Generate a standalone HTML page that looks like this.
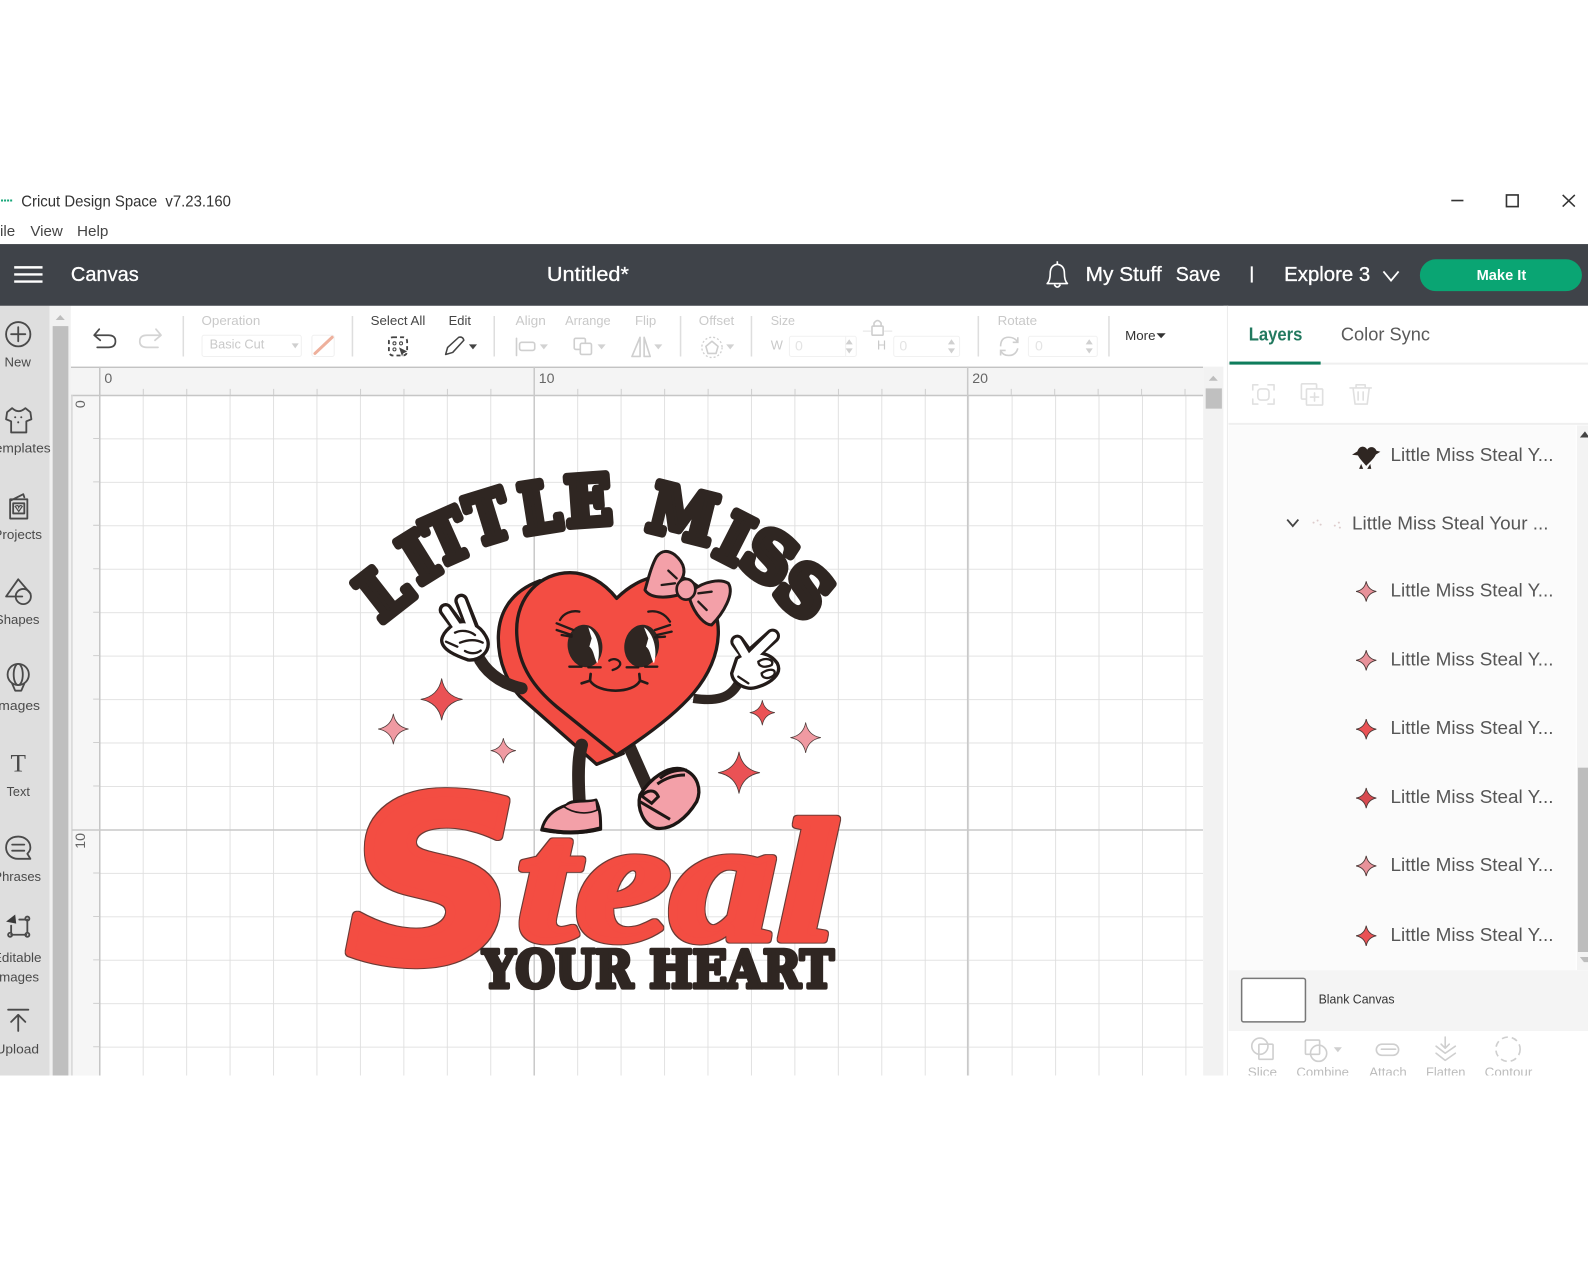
<!DOCTYPE html>
<html>
<head>
<meta charset="utf-8">
<title>Cricut Design Space</title>
<style>
html,body{margin:0;padding:0;background:#fff;width:1588px;height:1270px;overflow:hidden}
svg{display:block}
text{font-family:"Liberation Sans",sans-serif}
.nav{font-size:13px;fill:#4a4a4a;text-anchor:middle}
.off{font-size:13px;fill:#c9c9c9}
.on{font-size:13px;fill:#454545}
.lay{font-size:18.5px;fill:#565656}
.ic{fill:none;stroke:#4a4a4a;stroke-width:1.8;stroke-linecap:round;stroke-linejoin:round}
.icl{fill:none;stroke:#cfcfcf;stroke-width:1.6;stroke-linecap:round;stroke-linejoin:round}
.wh{font-size:20px;fill:#fff;stroke:#fff;stroke-width:.3px}
.bot{font-size:13px;fill:#bdbdbd}
.g{font-family:"DejaVu Serif",serif;font-weight:bold;font-size:200px;fill:#2f2622;stroke:#2f2622;stroke-width:26px;stroke-linejoin:round;text-anchor:middle}
</style>
</head>
<body>
<svg xmlns="http://www.w3.org/2000/svg" width="1588" height="1270" viewBox="0 0 1568 1254">
<defs>
<pattern id="grid" patternUnits="userSpaceOnUse" x="98" y="390" width="42.9" height="42.9">
<path d="M0,0H42.9M0,0V42.9" fill="none" stroke="#dfdfdf" stroke-width="1.8"/>
</pattern>
<clipPath id="cv"><rect x="70" y="362" width="1118" height="700"/></clipPath>
<clipPath id="bt"><rect x="1213" y="1018" width="355" height="44"/></clipPath>
<path id="st" d="M0,-10 Q1.6,-1.6 10,0 Q1.6,1.6 0,10 Q-1.6,1.6 -10,0 Q-1.6,-1.6 0,-10Z"/>
<filter id="ol" x="-20%" y="-20%" width="140%" height="140%">
<feMorphology in="SourceAlpha" operator="dilate" radius="3"/>
<feFlood flood-color="#6b3a36" result="c"/>
<feComposite in="c" in2="" operator="in"/>
</filter>
<filter id="outl" x="-20%" y="-20%" width="140%" height="140%">
<feMorphology in="SourceAlpha" operator="dilate" radius="2.500" result="d"/>
<feFlood flood-color="#6b3a36"/>
<feComposite in2="d" operator="in" result="o"/>
<feMerge><feMergeNode in="o"/><feMergeNode in="SourceGraphic"/></feMerge>
</filter>
</defs>
<rect width="1568" height="1254" fill="#fff"/>

<!-- title bar -->
<rect x="0" y="190" width="14" height="16" fill="#fff"/>
<path d="M1,198H12" stroke="#18a77a" stroke-width="2" stroke-dasharray="2 1"/>
<text x="21" y="204" font-size="15.500" fill="#333" textLength="207" lengthAdjust="spacingAndGlyphs">Cricut Design Space&#160; v7.23.160</text>
<path d="M1433,198H1445" stroke="#333" stroke-width="1.600"/>
<rect x="1487.500" y="192.500" width="11.500" height="11.500" fill="none" stroke="#333" stroke-width="1.600"/>
<path d="M1543,192.500L1555,204M1555,192.500L1543,204" stroke="#333" stroke-width="1.500"/>
<text x="0" y="233" font-size="14.500" fill="#444" textLength="15" lengthAdjust="spacingAndGlyphs">ile</text>
<text x="30" y="233" font-size="14.500" fill="#444" textLength="32" lengthAdjust="spacingAndGlyphs">View</text>
<text x="76" y="233" font-size="14.500" fill="#444" textLength="31" lengthAdjust="spacingAndGlyphs">Help</text>

<!-- header -->
<rect x="0" y="241" width="1568" height="61" fill="#3f4349"/>
<path d="M14,264H42M14,271H42M14,278H42" stroke="#fff" stroke-width="2.400"/>
<text class="wh" x="70" y="277.500" textLength="67" lengthAdjust="spacingAndGlyphs">Canvas</text>
<text class="wh" x="540" y="277.500" textLength="81" lengthAdjust="spacingAndGlyphs">Untitled*</text>
<path d="M1034,280Q1037,277 1037,270Q1037,262 1044,261Q1051,262 1051,270Q1051,277 1054,280Z M1044,261V258 M1041,281Q1044,286 1047,281" fill="none" stroke="#fff" stroke-width="1.600" stroke-linejoin="round"/>
<text class="wh" x="1072" y="277.500" textLength="75" lengthAdjust="spacingAndGlyphs">My Stuff</text>
<text class="wh" x="1161" y="277.500" textLength="44" lengthAdjust="spacingAndGlyphs">Save</text>
<path d="M1236,263V279" stroke="#fff" stroke-width="2"/>
<text class="wh" x="1268" y="277.500" textLength="85" lengthAdjust="spacingAndGlyphs">Explore 3</text>
<path d="M1366,268L1373.500,277L1381,268" fill="none" stroke="#fff" stroke-width="1.800"/>
<rect x="1402" y="256" width="160" height="31.500" rx="15.800" fill="#0aa573"/>
<text x="1458" y="276.500" font-size="15" font-weight="bold" fill="#fff" textLength="49" lengthAdjust="spacingAndGlyphs">Make It</text>

<!-- left nav -->
<rect x="0" y="302" width="49" height="760" fill="#dedede"/>
<rect x="49" y="302" width="21" height="760" fill="#f1f1f1"/>
<rect x="52" y="322" width="15.500" height="740" fill="#bfbfbf"/>
<path d="M55,316L59.500,311L64,316Z" fill="#bdbdbd"/>

<circle class="ic" cx="18" cy="330" r="12"/><path class="ic" d="M18,323V337M11,330H25"/>
<text class="nav" x="17.500" y="362" textLength="26" lengthAdjust="spacingAndGlyphs">New</text>

<path class="ic" d="M12,403L7,407L6,414L11,416V427H26V416L31,414L30,407L25,403Q18,409 12,403Z"/>
<circle cx="15" cy="412" r="1" fill="#4a4a4a"/><circle cx="21" cy="412" r="1" fill="#4a4a4a"/><circle cx="18" cy="417" r="1" fill="#4a4a4a"/>
<text class="nav" x="19" y="447" textLength="62" lengthAdjust="spacingAndGlyphs">Templates</text>

<path class="ic" d="M11,494L23,488L24,491M10,493H27V512H10Z"/><path class="ic" d="M13,497H24V507H13Z" stroke-width="1.200"/><path d="M15,500Q18,498 18.500,501Q20,498 22,500L18.500,505Z" fill="none" stroke="#4a4a4a" stroke-width="1.200"/>
<text class="nav" x="17.500" y="532" textLength="48" lengthAdjust="spacingAndGlyphs">Projects</text>

<path class="ic" d="M18,572L6,589H22"/><circle class="ic" cx="23" cy="589" r="7.500"/><path class="ic" d="M18,572L30,586"/>
<text class="nav" x="17" y="616" textLength="44" lengthAdjust="spacingAndGlyphs">Shapes</text>

<circle class="ic" cx="18" cy="666" r="10.500"/><ellipse class="ic" cx="18" cy="666" rx="4.500" ry="10.500"/><path class="ic" d="M12,675L15,682H21L24,675"/>
<text class="nav" x="17" y="701" textLength="45" lengthAdjust="spacingAndGlyphs">Images</text>

<text x="18" y="762" font-size="25" fill="#4a4a4a" text-anchor="middle" style="font-family:'Liberation Serif',serif">T</text>
<text class="nav" x="18" y="786" textLength="23" lengthAdjust="spacingAndGlyphs">Text</text>

<path class="ic" d="M18,826C10,826 6,831 6,837C6,843 11,848 18,848H30L27,843C29,841 30,839 30,837C30,831 25,826 18,826Z"/><path class="ic" d="M12,834H24M12,840H24"/>
<text class="nav" x="17" y="870" textLength="47" lengthAdjust="spacingAndGlyphs">Phrases</text>

<path class="ic" d="M11,923H26M27,908V921M19,908H25"/><path class="ic" d="M11,914V921"/><circle class="ic" cx="10" cy="923" r="2"/><circle class="ic" cx="27" cy="923" r="2"/><circle class="ic" cx="27" cy="907" r="2"/>
<path d="M6,910L15,903L16,912Z" fill="#3a3a3a"/>
<text class="nav" x="17" y="950" textLength="48" lengthAdjust="spacingAndGlyphs">Editable</text>
<text class="nav" x="17" y="969" textLength="43" lengthAdjust="spacingAndGlyphs">Images</text>

<path class="ic" d="M8,997H28M18,1018V1002M11,1009L18,1002L25,1009"/>
<text class="nav" x="17" y="1040" textLength="43" lengthAdjust="spacingAndGlyphs">Upload</text>

<!-- toolbar -->
<rect x="70" y="302" width="1143" height="60" fill="#fff"/>
<path d="M181,312V352M348,312V352M488,312V352M672,312V352M742,312V352M966,312V352M1095,312V352" stroke="#dedede" stroke-width="1.500"/>
<path d="M98,325L93,331L99,336M93,331H107Q114,331 114,337Q114,343 107,343H96" fill="none" stroke="#4a4a4a" stroke-width="1.700" stroke-linecap="round" stroke-linejoin="round"/>
<path d="M154,325L159,331L153,336M159,331H145Q138,331 138,337Q138,343 145,343H156" fill="none" stroke="#d4d4d4" stroke-width="1.700" stroke-linecap="round" stroke-linejoin="round"/>

<text class="off" x="199" y="321" textLength="58" lengthAdjust="spacingAndGlyphs">Operation</text>
<rect x="199.500" y="331" width="98" height="21" rx="2" fill="#fff" stroke="#f0f0f0"/>
<text class="off" x="207" y="344" textLength="54" lengthAdjust="spacingAndGlyphs">Basic Cut</text>
<path d="M288,339H295L291.500,344Z" fill="#cfcfcf"/>
<rect x="308" y="331" width="22" height="21" rx="2" fill="#fff" stroke="#f0f0f0"/>
<path d="M311,349L328,333" stroke="#eeb09c" stroke-width="3" stroke-linecap="round"/>

<text class="on" x="366" y="321" textLength="54" lengthAdjust="spacingAndGlyphs">Select All</text>
<rect x="384" y="333" width="18" height="18" rx="4" fill="none" stroke="#444" stroke-width="1.800" stroke-dasharray="4 3"/>
<circle cx="389.500" cy="339" r="1.500" fill="none" stroke="#444"/><circle cx="396" cy="339" r="1.500" fill="none" stroke="#444"/><circle cx="389.500" cy="345" r="1.500" fill="none" stroke="#444"/>
<path d="M394,343L402,347L398,349L397,352Z" fill="#444"/>
<text class="on" x="443" y="321" textLength="22" lengthAdjust="spacingAndGlyphs">Edit</text>
<path d="M440,350L442,343L453,333Q457,332 458,336L447,348Z" fill="none" stroke="#444" stroke-width="1.500" stroke-linejoin="round"/>
<path d="M463,340H471L467,345Z" fill="#444"/>

<text class="off" x="509" y="321" textLength="30" lengthAdjust="spacingAndGlyphs">Align</text>
<path class="icl" d="M510,334V351"/><rect class="icl" x="513" y="338" width="15" height="8" rx="2"/><path d="M533,340H541L537,345Z" fill="#d2d2d2"/>
<text class="off" x="558" y="321" textLength="45" lengthAdjust="spacingAndGlyphs">Arrange</text>
<rect class="icl" x="567" y="334" width="11" height="11" rx="1.500"/><rect class="icl" x="573" y="339" width="11" height="11" rx="1.500" style="fill:#fff"/><path d="M590,340H598L594,345Z" fill="#d2d2d2"/>
<text class="off" x="627" y="321" textLength="21" lengthAdjust="spacingAndGlyphs">Flip</text>
<path class="icl" d="M632,333L624,352H632ZM636,333L642,352H636Z"/><path d="M646,340H654L650,345Z" fill="#d2d2d2"/>
<text class="off" x="690" y="321" textLength="35" lengthAdjust="spacingAndGlyphs">Offset</text>
<circle cx="703" cy="343" r="10" fill="none" stroke="#d0d0d0" stroke-width="1.300" stroke-dasharray="2 2"/><path class="icl" d="M703,337L709,342L707,349H699L697,342Z"/><path d="M717,340H725L721,345Z" fill="#d2d2d2"/>
<text class="off" x="761" y="321" textLength="24" lengthAdjust="spacingAndGlyphs">Size</text>
<text class="off" x="761" y="345" textLength="12" lengthAdjust="spacingAndGlyphs">W</text>
<rect x="779.500" y="332" width="66" height="20" rx="2" fill="#fff" stroke="#f1f1f1"/>
<text x="785" y="346" font-size="14" fill="#e4e4e4">0</text>
<path d="M835,332V352" stroke="#f1f1f1"/><path d="M835,340L838.500,335L842,340ZM835,344L838.500,349L842,344Z" fill="#d0d0d0"/>
<path d="M852,327H860M873,327H881" stroke="#e4e4e4"/>
<rect class="icl" x="861" y="322" width="11" height="9" rx="1"/><path class="icl" d="M863,322V319Q866.500,314 870,319V322"/>
<text class="off" x="866" y="345" textLength="9" lengthAdjust="spacingAndGlyphs">H</text>
<rect x="882.500" y="332" width="65" height="20" rx="2" fill="#fff" stroke="#f1f1f1"/>
<text x="888" y="346" font-size="14" fill="#e4e4e4">0</text>
<path d="M936,340L939.500,335L943,340ZM936,344L939.500,349L943,344Z" fill="#d0d0d0"/>
<text class="off" x="985" y="321" textLength="39" lengthAdjust="spacingAndGlyphs">Rotate</text>
<path d="M988,342Q988,333 996,333Q1002,333 1005,338M1005,344Q1003,351 996,351Q990,351 988,346M1005,333V338H1000M988,351V346H993" fill="none" stroke="#cfcfcf" stroke-width="1.600"/>
<rect x="1015.500" y="332" width="68" height="20" rx="2" fill="#fff" stroke="#f1f1f1"/>
<text x="1022" y="346" font-size="14" fill="#e4e4e4">0</text>
<path d="M1072,340L1075.500,335L1079,340ZM1072,344L1075.500,349L1079,344Z" fill="#d0d0d0"/>
<text x="1111" y="335.500" font-size="12.500" fill="#333" textLength="30" lengthAdjust="spacingAndGlyphs">More</text>
<path d="M1142,329H1151L1146.500,334Z" fill="#333"/>

<!-- canvas -->
<g clip-path="url(#cv)">
<rect x="70" y="362" width="1118" height="700" fill="#fff"/>
<rect x="98" y="390" width="1090" height="672" fill="url(#grid)"/>
<rect x="70" y="362" width="1118" height="28" fill="#f4f4f4"/>
<rect x="70" y="390" width="28" height="672" fill="#f6f6f6"/>
<path d="M70,362.500H1188" stroke="#bcbcbc" stroke-width="1.500"/>
<path d="M70,390.500H1188" stroke="#c6c6c6" stroke-width="1.500"/>
<path d="M98.500,362V1062" stroke="#c6c6c6" stroke-width="1.500"/>
<path d="M71,390V1062" stroke="#d6d6d6" stroke-width="1.500"/>
<path d="M527.500,362V1062M955.500,362V1062M71,819.500H1188" stroke="#c9c9c9" stroke-width="1.500"/>
<path d="M141.500,384V390M184.400,384V390M227.300,384V390M270.200,384V390M313.100,384V390M356,384V390M398.900,384V390M441.800,384V390M484.700,384V390M570.500,384V390M613.400,384V390M656.300,384V390M699.200,384V390M742.100,384V390M785,384V390M827.900,384V390M870.800,384V390M913.700,384V390M998.500,384V390M1041.400,384V390M1084.300,384V390M1127.200,384V390M1170.100,384V390" stroke="#cfcfcf"/>
<path d="M92,433H98M92,475.800H98M92,518.700H98M92,561.600H98M92,604.500H98M92,647.400H98M92,690.300H98M92,733.200H98M92,776.100H98M92,862H98M92,904.900H98M92,947.800H98M92,990.700H98M92,1033.600H98" stroke="#cfcfcf"/>
<text x="103" y="378" font-size="14" fill="#666">0</text>
<text x="532" y="378" font-size="14" fill="#666">10</text>
<text x="960" y="378" font-size="14" fill="#666">20</text>
<text transform="translate(84,403) rotate(-90)" font-size="14" fill="#666">0</text>
<text transform="translate(84,838) rotate(-90)" font-size="14" fill="#666">10</text>
</g>

<!-- canvas scrollbar -->
<rect x="1188" y="362" width="20" height="700" fill="#f2f2f2"/>
<path d="M1193.500,376L1198,371L1202.500,376Z" fill="#bdbdbd"/>
<rect x="1190.500" y="383.500" width="16" height="20" fill="#c0c0c0"/>
<rect x="1208" y="302" width="5" height="760" fill="#fff"/>
<path d="M1212,302V1062" stroke="#ececec"/>

<!-- artwork -->
<g transform="scale(.98740)">
<g transform="translate(340,450) scale(.33333)">
<!-- legs + right arm behind heart -->
<path d="M868,890L930,1030" stroke="#2f2622" stroke-width="38" fill="none" stroke-linecap="round"/>
<path d="M1060,745C1130,755 1170,745 1195,700" stroke="#2f2622" stroke-width="28" fill="none"/>
<!-- heart back -->
<path d="M600,392C510,425 475,490 475,565C475,640 505,700 540,740L770,943L850,910L700,600Z" fill="#f34d43" stroke="#231b19" stroke-width="10" stroke-linejoin="round"/>
<!-- heart front -->
<path d="M830,445C790,395 740,368 690,368C600,368 530,440 530,540C530,650 590,720 650,770L830,915C900,870 1000,800 1060,730C1110,670 1135,610 1135,545C1135,470 1090,395 1000,375C930,370 870,405 830,445Z" fill="#f34d43" stroke="#231b19" stroke-width="10" stroke-linejoin="round"/>
<path d="M725,885C712,930 715,1000 718,1050" stroke="#2f2622" stroke-width="38" fill="none" stroke-linecap="round"/>
<!-- left arm -->
<path d="M420,630C450,680 500,705 545,715" stroke="#2f2622" stroke-width="36" fill="none" stroke-linecap="round"/>
<!-- left glove -->
<path d="M395,530L364,452" stroke="#231b19" stroke-width="42" stroke-linecap="round"/>
<path d="M358,535L317,480" stroke="#231b19" stroke-width="42" stroke-linecap="round"/>
<path d="M345,520C380,505 425,525 443,570C452,605 420,632 385,630C350,618 305,600 305,570C307,550 330,530 345,520Z" fill="#fff" stroke="#231b19" stroke-width="10" stroke-linejoin="round"/>
<path d="M395,535L364,452" stroke="#fff" stroke-width="22" stroke-linecap="round"/>
<path d="M358,540L317,480" stroke="#fff" stroke-width="22" stroke-linecap="round"/>
<path d="M345,548C365,538 390,543 405,555M360,578C385,568 410,568 428,578M318,575L352,590M375,603C390,612 410,612 422,602" fill="none" stroke="#231b19" stroke-width="7" stroke-linecap="round"/>
<!-- right glove -->
<path d="M1240,610L1298,558" stroke="#231b19" stroke-width="44" stroke-linecap="round"/>
<path d="M1225,620L1192,575" stroke="#231b19" stroke-width="42" stroke-linecap="round"/>
<path d="M1190,625C1225,600 1285,600 1312,640C1328,672 1292,700 1250,712C1220,722 1178,702 1175,670Z" fill="#fff" stroke="#231b19" stroke-width="10" stroke-linejoin="round"/>
<path d="M1230,625L1298,558" stroke="#fff" stroke-width="26" stroke-linecap="round"/>
<path d="M1225,630L1192,575" stroke="#fff" stroke-width="24" stroke-linecap="round"/>
<path d="M1255,635C1275,620 1305,628 1295,645C1275,655 1255,650 1255,635M1265,670C1285,655 1312,655 1302,675C1285,690 1265,685 1265,670M1195,680L1225,700" fill="none" stroke="#231b19" stroke-width="7" stroke-linecap="round"/>
<!-- bow -->
<path d="M1020,395C1040,370 1035,340 1005,315C985,300 965,300 950,320C935,345 925,385 915,420C930,445 975,445 1015,435Z" fill="#f3a0a8" stroke="#231b19" stroke-width="9" stroke-linejoin="round"/>
<path d="M1060,420C1090,395 1140,385 1165,400C1185,430 1150,490 1115,525C1095,525 1065,495 1050,450Z" fill="#f3a0a8" stroke="#231b19" stroke-width="9" stroke-linejoin="round"/>
<ellipse cx="1038" cy="418" rx="28" ry="31" fill="#f3a0a8" stroke="#231b19" stroke-width="8"/>
<path d="M985,362L1010,385M965,405L1005,400M1075,430L1115,425M1075,455L1100,480" fill="none" stroke="#231b19" stroke-width="7" stroke-linecap="round"/>
<!-- face -->
<ellipse cx="735" cy="588" rx="52" ry="64" fill="#2f2622" transform="rotate(-8 735 588)"/>
<ellipse cx="905" cy="588" rx="52" ry="64" fill="#2f2622" transform="rotate(8 905 588)"/>
<path d="M745,532C772,548 784,600 772,640C762,625 762,600 748,590L755,565Z" fill="#fff"/>
<path d="M912,532C940,548 954,600 942,640C932,625 932,600 918,590L925,565Z" fill="#fff"/>
<path d="M688,650H725M745,652H782M860,652H895M915,650H952M660,510C670,490 695,480 718,485M925,485C950,480 975,490 990,515M650,520L700,540M650,540L695,555M665,555L695,560M990,525L945,540M995,545L950,555M975,560L945,562" fill="none" stroke="#231b19" stroke-width="7" stroke-linecap="round"/>
<path d="M808,632C820,622 845,630 840,645C835,655 825,658 818,660" fill="none" stroke="#231b19" stroke-width="7" stroke-linecap="round"/>
<path d="M725,700L750,692C775,732 880,732 900,692L922,700M750,692L752,672M900,692L898,672" fill="none" stroke="#231b19" stroke-width="8" stroke-linecap="round" stroke-linejoin="round"/>
<!-- stars -->
<g stroke="#4d3a38" stroke-linejoin="round">
<use href="#st" transform="translate(305,748) scale(6.200)" fill="#ea5255" stroke-width=".4"/>
<use href="#st" transform="translate(160,837) scale(4.500)" fill="#f09aa2" stroke-width=".5"/>
<use href="#st" transform="translate(490,902) scale(3.700)" fill="#f09aa2" stroke-width=".6"/>
<use href="#st" transform="translate(1267,788) scale(3.700)" fill="#ea5255" stroke-width=".6"/>
<use href="#st" transform="translate(1397,863) scale(4.500)" fill="#f09aa2" stroke-width=".5"/>
<use href="#st" transform="translate(1197,968) scale(6.200)" fill="#ea5255" stroke-width=".4"/>
</g>
<!-- little miss -->
<text class="g" transform="translate(175,478) rotate(-38) scale(.95,1)">L</text>
<text class="g" transform="translate(274,382) rotate(-32) scale(.9,1)">I</text>
<text class="g" transform="translate(350,327) rotate(-24) scale(.82,1)">T</text>
<text class="g" transform="translate(466,270) rotate(-17) scale(.82,1)">T</text>
<text class="g" transform="translate(611,242) rotate(-9) scale(.85,1)">L</text>
<text class="g" transform="translate(750,223) rotate(-4) scale(.9,1)">E</text>
<text class="g" transform="translate(1012,261) rotate(14) scale(.9,1)">M</text>
<text class="g" transform="translate(1152,330) rotate(27) scale(.9,1)">I</text>
<text class="g" transform="translate(1250,381) rotate(33) scale(1,1)">S</text>
<text class="g" transform="translate(1348,476) rotate(40) scale(1,1)">S</text>
</g>
<g transform="translate(340,760) scale(.33333)">
<!-- shoes -->
<path d="M605,210C615,165 650,145 680,135C700,115 740,130 768,120C782,150 782,180 782,208Q700,228 605,210Z" fill="#f3a0a8" stroke="#1d1614" stroke-width="9" stroke-linejoin="round"/>
<path d="M608,208Q700,228 782,205" fill="none" stroke="#1d1614" stroke-width="12"/>
<path d="M672,140C695,118 745,130 768,120L772,150C740,165 700,160 672,140Z" fill="#ef8f9c" stroke="#1d1614" stroke-width="5"/>
<path d="M900,105C930,55 985,15 1030,28C1075,45 1085,90 1070,125C1040,175 995,210 950,205C910,195 890,145 900,105Z" fill="#f3a0a8" stroke="#1d1614" stroke-width="10" stroke-linejoin="round"/>
<path d="M900,125L990,178M905,108C920,90 945,85 955,110L935,130ZM960,55Q990,28 1040,30M952,72Q990,45 1035,45" fill="none" stroke="#1d1614" stroke-width="9"/>
<!-- Steal -->
<g filter="url(#outl)">
<text transform="translate(20,602) scale(1.050,1)" style="font-family:'DejaVu Sans',sans-serif;font-weight:bold;font-style:italic;font-size:680px;fill:#f34d43;stroke:#f34d43;stroke-width:26px;stroke-linejoin:round">S</text>
<text transform="translate(530,538) scale(1.230,1)" style="font-family:'Liberation Serif',serif;font-weight:bold;font-style:italic;font-size:520px;fill:#f34d43;stroke:#f34d43;stroke-width:20px;stroke-linejoin:round">teal</text>
</g>
<!-- Your heart -->
<text x="428" y="682" textLength="1054" lengthAdjust="spacingAndGlyphs" style="font-family:'DejaVu Serif',serif;font-weight:bold;font-size:155px;fill:#2f2622;stroke:#2f2622;stroke-width:13px;stroke-linejoin:round">YOUR HEART</text>
</g>
</g>

<!-- right panel -->
<rect x="1213" y="302" width="355" height="760" fill="#fff" style="display:none"/>
<rect x="1213" y="302" width="355" height="656" fill="#fff"/>
<rect x="1213" y="1018" width="355" height="44" fill="#fff"/>
<text x="1233" y="336" font-size="18" font-weight="bold" fill="#22795f" textLength="53" lengthAdjust="spacingAndGlyphs">Layers</text>
<text x="1324" y="336" font-size="18" fill="#5a5a5a" textLength="88" lengthAdjust="spacingAndGlyphs">Color Sync</text>
<path d="M1213,359H1568" stroke="#efefef" stroke-width="2"/>
<rect x="1214" y="357" width="90" height="3" fill="#0e7d5c"/>
<path class="icl" style="stroke:#e0e0e0" d="M1237,385V380H1242M1252,380H1258V385M1258,394V399H1252M1242,399H1237V394"/><rect class="icl" style="stroke:#e0e0e0" x="1242" y="384" width="11" height="11" rx="3"/>
<rect class="icl" style="stroke:#e0e0e0" x="1285" y="379" width="15" height="15" rx="1"/><rect class="icl" style="stroke:#e0e0e0;fill:#fff" x="1290" y="384" width="16" height="16" rx="1"/><path class="icl" style="stroke:#e0e0e0" d="M1298,388V396M1294,392H1302"/>
<path class="icl" style="stroke:#e0e0e0" d="M1333,383H1354M1339,383V380H1348V383M1336,383L1338,399H1350L1352,383M1341,387V395M1346,387V395"/>
<path d="M1213,418.500H1568" stroke="#efefef" stroke-width="2"/>
<rect x="1213" y="420" width="343" height="538" fill="#fbfbfb"/>
<rect x="1557" y="420" width="11" height="538" fill="#f3f3f3"/>
<path d="M1560,432L1565,426L1568,430V432Z" fill="#444"/>
<rect x="1558" y="758" width="10" height="182" fill="#bdbdbd"/>
<path d="M1560,945H1568V950L1564,950Z" fill="#bdbdbd"/>

<!-- layers -->
<path d="M1349,460C1344,454 1338,449 1341,444C1343,440 1348,440 1350,444C1352,440 1358,441 1359,445C1360,450 1354,455 1349,460Z" fill="#2f2622"/>
<path d="M1335,449L1343,444L1344,450ZM1363,446L1355,444L1355,451ZM1344,458L1346,463H1342ZM1353,458L1354,463H1350Z" fill="#2f2622"/>
<text class="lay" x="1373" y="455" textLength="161" lengthAdjust="spacingAndGlyphs">Little Miss Steal Y...</text>

<path d="M1271,513L1276.500,519.500L1282,513" fill="none" stroke="#444" stroke-width="1.800"/>
<circle cx="1297" cy="516" r="1" fill="#dcc"/><circle cx="1301" cy="514" r="1" fill="#dcc"/><circle cx="1304" cy="518" r="1" fill="#dcc"/>
<circle cx="1318" cy="519" r="1" fill="#dcc"/><circle cx="1322" cy="516" r="1" fill="#dcc"/><circle cx="1323" cy="521" r="1" fill="#dcc"/>
<text class="lay" x="1335" y="523" textLength="194" lengthAdjust="spacingAndGlyphs">Little Miss Steal Your ...</text>

<g stroke="#4d3a38" stroke-width=".9">
<use href="#st" transform="translate(1349,584)" fill="#e8929a"/>
<use href="#st" transform="translate(1349,652)" fill="#e8929a"/>
<use href="#st" transform="translate(1349,720)" fill="#ea5255"/>
<use href="#st" transform="translate(1349,788)" fill="#d84a50"/>
<use href="#st" transform="translate(1349,855)" fill="#e8929a"/>
<use href="#st" transform="translate(1349,924)" fill="#ea5255"/>
</g>
<text class="lay" x="1373" y="589" textLength="161" lengthAdjust="spacingAndGlyphs">Little Miss Steal Y...</text>
<text class="lay" x="1373" y="657" textLength="161" lengthAdjust="spacingAndGlyphs">Little Miss Steal Y...</text>
<text class="lay" x="1373" y="725" textLength="161" lengthAdjust="spacingAndGlyphs">Little Miss Steal Y...</text>
<text class="lay" x="1373" y="793" textLength="161" lengthAdjust="spacingAndGlyphs">Little Miss Steal Y...</text>
<text class="lay" x="1373" y="860" textLength="161" lengthAdjust="spacingAndGlyphs">Little Miss Steal Y...</text>
<text class="lay" x="1373" y="929" textLength="161" lengthAdjust="spacingAndGlyphs">Little Miss Steal Y...</text>

<!-- blank canvas -->
<rect x="1213" y="958" width="355" height="60" fill="#f4f4f4"/>
<rect x="1226" y="966" width="63" height="43" rx="2" fill="#fff" stroke="#777" stroke-width="1.500"/>
<text x="1302" y="991" font-size="13" fill="#333" textLength="75" lengthAdjust="spacingAndGlyphs">Blank Canvas</text>

<!-- bottom tools -->
<circle class="icl" cx="1244" cy="1033" r="8"/><rect class="icl" x="1243" y="1031" width="14" height="15" rx="1"/>
<rect class="icl" x="1289" y="1027" width="14" height="14" rx="1"/><circle class="icl" cx="1302" cy="1040" r="8"/><path d="M1317,1034H1325L1321,1039Z" fill="#cfcfcf"/>
<rect class="icl" x="1359" y="1031" width="22" height="11" rx="5.500"/><path class="icl" d="M1364,1036H1378"/>
<path class="icl" d="M1427,1024V1035M1423,1031L1427,1035L1431,1031M1418,1033L1427,1040L1437,1033M1418,1040L1427,1047L1437,1040"/>
<circle cx="1489" cy="1036" r="12" fill="none" stroke="#cfcfcf" stroke-width="1.600" stroke-dasharray="6 4"/>
<g clip-path="url(#bt)">
<text class="bot" x="1232" y="1063" textLength="29" lengthAdjust="spacingAndGlyphs">Slice</text>
<text class="bot" x="1280" y="1063" textLength="52" lengthAdjust="spacingAndGlyphs">Combine</text>
<text class="bot" x="1352" y="1063" textLength="37" lengthAdjust="spacingAndGlyphs">Attach</text>
<text class="bot" x="1408" y="1063" textLength="39" lengthAdjust="spacingAndGlyphs">Flatten</text>
<text class="bot" x="1466" y="1063" textLength="47" lengthAdjust="spacingAndGlyphs">Contour</text>
</g>
<rect x="0" y="1062" width="1568" height="192" fill="#fff"/>
</svg>
</body>
</html>
